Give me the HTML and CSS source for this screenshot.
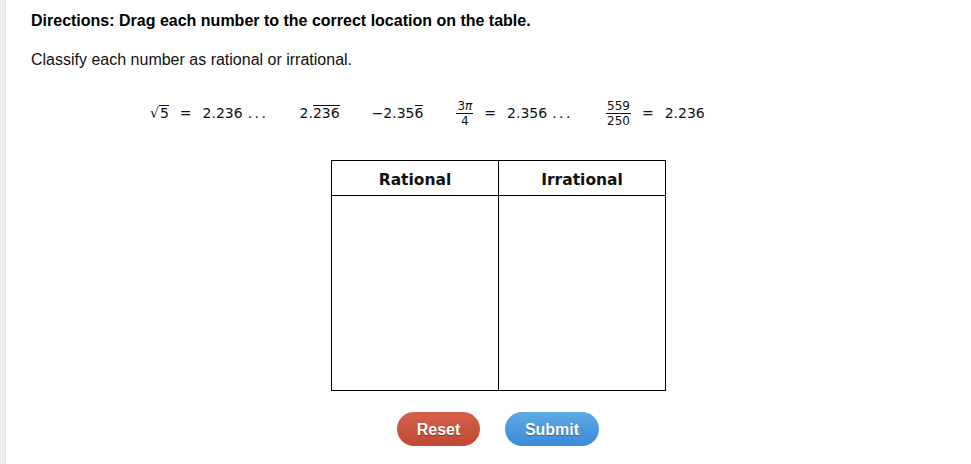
FILE: index.html
```html
<!DOCTYPE html>
<html>
<head>
<meta charset="utf-8">
<link rel="stylesheet" href="styles.css">
</head>
<body>
<div class="page">
  <div class="strip"></div>
  <div class="content">
    <p class="directions">Directions: Drag each number to the correct location on the table.</p>
    <p class="prompt">Classify each number as rational or irrational.</p>
    <div class="tiles">
      <span class="tile t1"><span class="sqrt">√<span class="rad">5</span></span><span class="eq">=</span>2.236<span class="dots">...</span></span>
      <span class="tile t2">2.<span class="over">236</span></span>
      <span class="tile t3">−2.35<span class="over">6</span></span>
      <span class="tile t4"><span class="frac"><span class="num">3<i>π</i></span><span class="den">4</span></span><span class="eq">=</span>2.356<span class="dots">...</span></span>
      <span class="tile t5"><span class="frac"><span class="num">559</span><span class="den">250</span></span><span class="eq">=</span>2.236</span>
    </div>
    <div class="table">
      <div class="col">
        <div class="head">Rational</div>
        <div class="body"></div>
      </div>
      <div class="col">
        <div class="head">Irrational</div>
        <div class="body"></div>
      </div>
    </div>
    <div class="buttons">
      <button class="btn reset">Reset</button>
      <button class="btn submit">Submit</button>
    </div>
  </div>
</div>
</body>
</html>
```
FILE: styles.css
```css
html, body {
  margin: 0;
  padding: 0;
  background: #ffffff;
}
.page {
  display: flex;
  width: 971px;
  height: 464px;
  overflow: hidden;
}
.strip {
  width: 5px;
  flex: none;
  background: #efefef;
  border-right: 1px solid #e2e2e2;
}
.content {
  flex: 1;
  padding-left: 25px;
  font-family: "Liberation Sans", Arial, sans-serif;
  color: #000;
}
.directions {
  margin: 12px 0 0 0;
  font-size: 16px;
  font-weight: bold;
  line-height: 18px;
}
.prompt {
  margin: 21px 0 0 0;
  font-size: 16px;
  line-height: 18px;
  color: #111;
}
.tiles {
  display: flex;
  align-items: center;
  height: 40px;
  margin-top: 24px;
  padding-left: 119px;
  font-family: "DejaVu Sans", sans-serif;
  font-size: 14px;
  color: #111;
}
.tile {
  display: inline-flex;
  align-items: center;
  white-space: nowrap;
}
.t2 { margin-left: 31px; }
.t3 { margin-left: 32px; }
.t4 { margin-left: 33px; }
.t5 { margin-left: 33px; }
.sqrt { display: inline-flex; }
.rad { border-top: 1px solid #111; padding-left: 1px; line-height: 15px; }
.eq { margin: 0 11px; }
.dots { margin-left: 5px; letter-spacing: 2.5px; }
.over { border-top: 1px solid #111; line-height: 15px; }
.frac {
  display: inline-flex;
  flex-direction: column;
  align-items: center;
  font-size: 12px;
  line-height: 12px;
}
.frac i { font-style: italic; }
.num { border-bottom: 1px solid #111; padding: 0 1px 1px; }
.den { padding-top: 1px; }
.table {
  display: flex;
  width: 333px;
  margin-top: 27px;
  margin-left: 300px;
  border: 1px solid #000;
}
.col {
  flex: 1;
  display: flex;
  flex-direction: column;
}
.col + .col {
  border-left: 1px solid #000;
}
.head {
  height: 34px;
  padding-top: 3px;
  box-sizing: border-box;
  border-bottom: 1px solid #000;
  display: flex;
  align-items: center;
  justify-content: center;
  font-family: "DejaVu Sans", Verdana, sans-serif;
  font-weight: bold;
  font-size: 15.5px;
  color: #111;
}
.head {
  height: 35px;
}
.body {
  height: 194px;
}
.buttons {
  display: flex;
  gap: 25px;
  margin-top: 21px;
  margin-left: 366px;
}
.btn {
  height: 34px;
  border: none;
  border-radius: 17px;
  font-family: "Liberation Sans", Arial, sans-serif;
  font-weight: bold;
  font-size: 16px;
  color: #fff;
  text-shadow: 0 1px 1px rgba(0,0,0,0.35);
  padding: 2px 0 0 0;
}
.reset {
  width: 83px;
  background: linear-gradient(#d5614c, #bf4933);
}
.submit {
  width: 94px;
  background: linear-gradient(#5eaae4, #3a8ad8);
}
```
